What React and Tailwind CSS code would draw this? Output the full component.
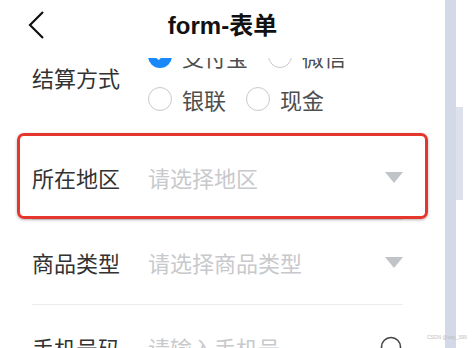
import React from "react";

const cjk = { fontFamily: '"Noto Sans CJK SC", sans-serif' };

function Radio({ checked, label }) {
  return (
    <div className="mr-[20px] flex items-center">
      {checked ? (
        <span className="flex h-[24px] w-[24px] items-center justify-center rounded-full bg-[#1989fa]">
          <svg width="14" height="14" viewBox="0 0 14 14">
            <path d="M3 7.2l2.7 2.6L11 4.4" fill="none" stroke="#fff" strokeWidth="2" strokeLinecap="round" strokeLinejoin="round" />
          </svg>
        </span>
      ) : (
        <span className="h-[24px] w-[24px] rounded-full border border-[#c8c9cc]" />
      )}
      <span className="ml-[10px] text-[22px] leading-none text-[#4e4e4e]">{label}</span>
    </div>
  );
}

function Caret() {
  return (
    <svg width="18" height="11" viewBox="0 0 18 11" className="shrink-0">
      <path d="M0 0h18L9 11z" fill="#c0c3c8" />
    </svg>
  );
}

function PickerRow({ label, placeholder, icon, children }) {
  return (
    <div className="relative pl-[32px] pr-[42px]">
      <div className="flex h-[85px] items-center border-b border-[#ebedf0]">
        <span className="w-[116px] shrink-0 text-[22px] leading-none text-[#323233]">{label}</span>
        <span className="flex-1 text-[22px] leading-none text-[#c8c9cc]">{placeholder}</span>
        {icon}
      </div>
      {children}
    </div>
  );
}

export default function App() {
  return (
    <div className="relative flex h-[348px] w-[474px] overflow-hidden bg-white" style={cjk}>
      <div className="flex h-full w-[445px] shrink-0 flex-col overflow-hidden">
        <header className="h-[58px] shrink-0 bg-white">
          <div className="grid h-[50px] grid-cols-[1fr_auto_1fr] items-center">
            <svg width="20" height="28" viewBox="0 0 20 28" className="ml-[27px]">
              <path d="M16 1L3 14l13 13" fill="none" stroke="#111" strokeWidth="2.2" />
            </svg>
            <h1
              className="pt-[2px] text-[24px] font-semibold leading-none text-[#111]"
              style={{ fontFamily: '"Liberation Sans", "Noto Sans CJK SC", sans-serif' }}
            >
              form-表单
            </h1>
            <span />
          </div>
        </header>

        <div className="flex-1 overflow-hidden">
          <div className="-mt-[38px]">
            <div className="pl-[32px] pr-[42px]">
              <div className="flex h-[115px] items-center border-b border-[#ebedf0]">
                <span className="w-[116px] shrink-0 text-[22px] leading-none text-[#323233]">结算方式</span>
                <div className="flex flex-col">
                  <div className="flex h-[43px] items-center">
                    <Radio checked label="支付宝" />
                    <Radio label="微信" />
                  </div>
                  <div className="flex h-[43px] items-center">
                    <Radio label="银联" />
                    <Radio label="现金" />
                  </div>
                </div>
              </div>
            </div>

            <PickerRow label="所在地区" placeholder="请选择地区" icon={<Caret />}>
              <div className="absolute bottom-[1px] left-[17px] right-[17px] top-[-2px] rounded-[7px] border-[3px] border-[#e4362c] shadow-[0_1px_3px_rgba(0,0,0,0.3)]" />
            </PickerRow>

            <PickerRow label="商品类型" placeholder="请选择商品类型" icon={<Caret />} />

            <PickerRow
              label="手机号码"
              placeholder="请输入手机号"
              icon={
                <svg width="22" height="22" viewBox="0 0 22 22" className="mr-[1px] shrink-0">
                  <circle cx="11" cy="11" r="9.5" fill="none" stroke="#444" strokeWidth="1.6" />
                </svg>
              }
            />
          </div>
        </div>
      </div>

      <div className="h-full w-[11px] shrink-0 bg-[#d3d9e6]" />
      <div className="w-[7px] shrink-0 pt-[107px]">
        <div className="h-[93px] bg-[#dce1eb]" />
      </div>
      <div className="flex-1" />

      <span
        className="absolute left-[427px] top-[335px] text-[5px] leading-none text-[#bdbdbd]"
        style={{ fontFamily: '"Liberation Sans", sans-serif' }}
      >
        CSDN @day_399
      </span>
    </div>
  );
}
